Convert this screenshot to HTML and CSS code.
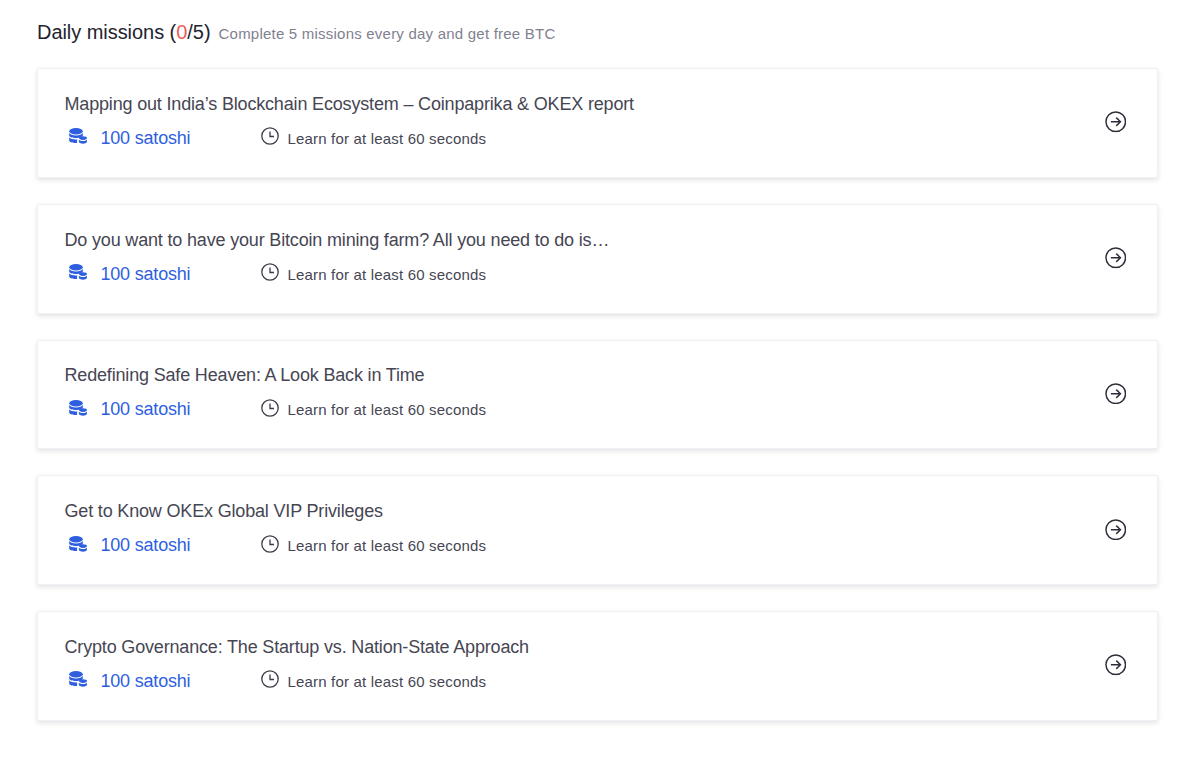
FILE: index.html
```html
<!DOCTYPE html>
<html lang="en">
<head>
<meta charset="utf-8">
<title>Daily missions</title>
<link rel="stylesheet" href="styles.css">
</head>
<body>
<svg class="defs" width="0" height="0" aria-hidden="true">
  <defs>
    <symbol id="coins" viewBox="0 0 18 17">
      <ellipse cx="7" cy="3.200" rx="6.800" ry="3.200"/>
      <path d="M.2 4.800C1 6.500 3.800 7.500 7 7.500s6-1 6.800-2.700V7.200C13.800 9 10.800 10 7 10S.2 9 .2 7.200z"/>
      <path d="M.2 9.300C1.200 10.700 3.900 11.500 7 11.500c.4 0 .8 0 1.100-.1v3.500c-.3.100-.7.100-1.100.100-3.800 0-6.800-1-6.800-2.800z"/>
      <ellipse cx="14" cy="10.100" rx="4" ry="1.800"/>
      <path d="M9.800 11.800c.9.900 2.500 1.300 4.200 1.300s3.300-.4 4-1.300v1.700c0 1.300-1.800 2.200-4 2.200s-4.200-.9-4.200-2.200z"/>
    </symbol>
    <symbol id="clock" viewBox="0 0 18 18">
      <circle cx="9" cy="9" r="8.200" fill="none" stroke="currentColor" stroke-width="1.300"/>
      <path d="M9 4.500V9.500H13" fill="none" stroke="currentColor" stroke-width="1.300"/>
    </symbol>
    <symbol id="go" viewBox="0 0 22 22">
      <circle cx="11" cy="11" r="10" fill="none" stroke="currentColor" stroke-width="1.500"/>
      <path d="M6 11H15.500M11.500 6.800 15.800 11l-4.300 4.200" fill="none" stroke="currentColor" stroke-width="1.500"/>
    </symbol>
  </defs>
</svg>
<main class="page">
  <header class="head">
    <h1 class="head-title">Daily missions (<span class="count">0</span>/5)</h1>
    <p class="head-sub">Complete 5 missions every day and get free BTC</p>
  </header>
  <ul class="list">
    <li class="card">
      <div class="info">
        <h2 class="title">Mapping out India’s Blockchain Ecosystem – Coinpaprika &amp; OKEX report</h2>
        <div class="meta">
          <span class="reward"><svg class="coin-icon"><use href="#coins"/></svg>100 satoshi</span>
          <span class="task"><svg class="clock-icon"><use href="#clock"/></svg>Learn for at least 60 seconds</span>
        </div>
      </div>
      <svg class="go-icon"><use href="#go"/></svg>
    </li>
    <li class="card">
      <div class="info">
        <h2 class="title">Do you want to have your Bitcoin mining farm? All you need to do is…</h2>
        <div class="meta">
          <span class="reward"><svg class="coin-icon"><use href="#coins"/></svg>100 satoshi</span>
          <span class="task"><svg class="clock-icon"><use href="#clock"/></svg>Learn for at least 60 seconds</span>
        </div>
      </div>
      <svg class="go-icon"><use href="#go"/></svg>
    </li>
    <li class="card">
      <div class="info">
        <h2 class="title">Redefining Safe Heaven: A Look Back in Time</h2>
        <div class="meta">
          <span class="reward"><svg class="coin-icon"><use href="#coins"/></svg>100 satoshi</span>
          <span class="task"><svg class="clock-icon"><use href="#clock"/></svg>Learn for at least 60 seconds</span>
        </div>
      </div>
      <svg class="go-icon"><use href="#go"/></svg>
    </li>
    <li class="card">
      <div class="info">
        <h2 class="title">Get to Know OKEx Global VIP Privileges</h2>
        <div class="meta">
          <span class="reward"><svg class="coin-icon"><use href="#coins"/></svg>100 satoshi</span>
          <span class="task"><svg class="clock-icon"><use href="#clock"/></svg>Learn for at least 60 seconds</span>
        </div>
      </div>
      <svg class="go-icon"><use href="#go"/></svg>
    </li>
    <li class="card">
      <div class="info">
        <h2 class="title">Crypto Governance: The Startup vs. Nation-State Approach</h2>
        <div class="meta">
          <span class="reward"><svg class="coin-icon"><use href="#coins"/></svg>100 satoshi</span>
          <span class="task"><svg class="clock-icon"><use href="#clock"/></svg>Learn for at least 60 seconds</span>
        </div>
      </div>
      <svg class="go-icon"><use href="#go"/></svg>
    </li>
  </ul>
</main>
</body>
</html>
```
FILE: styles.css
```css
* { box-sizing: border-box; }
html, body { margin: 0; padding: 0; background: #fff; }
body { font-family: "Liberation Sans", Arial, sans-serif; color: #3a3a48; }
.defs { display: block; height: 0; }
.page { padding: 19px 34px 30px 37px; }
.head { display: flex; align-items: baseline; gap: 8px; height: 49px; }
.head-title { margin: 0; font-size: 20px; line-height: 26px; font-weight: 400; letter-spacing: -.05px; color: #23232f; }
.count { color: #e8615c; }
.head-sub { margin: 0; font-size: 15px; line-height: 26px; letter-spacing: .22px; color: #81818f; }
.list { list-style: none; margin: 0; padding: 0; display: flex; flex-direction: column; gap: 26px; }
.card {
  height: 109.75px;
  display: flex;
  align-items: center;
  justify-content: space-between;
  padding: 0 31px 0 26.500px;
  background: #fff;
  border: 1px solid #f0f0f5;
  border-radius: 2px;
  box-shadow: 0 2px 5px rgba(40, 40, 70, .13);
}
.info { display: flex; flex-direction: column; gap: 10.500px; margin-top: -3.500px; }
.title { margin: 0; font-size: 18px; line-height: 24px; font-weight: 400; letter-spacing: -.17px; color: #464653; }
.meta { display: flex; align-items: center; height: 24px; }
.reward { display: flex; align-items: center; width: 196px; font-size: 18px; letter-spacing: -.2px; color: #2f5fe0; }
.task { display: flex; align-items: center; font-size: 15px; letter-spacing: .18px; color: #464653; }
.coin-icon { width: 18px; height: 17px; margin: -3px 14px 0 4px; fill: #2f5fe0; flex: none; }
.clock-icon { width: 18px; height: 18px; margin: -4px 9px 0 0; color: #3a3a48; flex: none; }
.go-icon { width: 21.500px; height: 21.500px; margin-top: -1.500px; color: #2e2e3a; flex: none; }
```
